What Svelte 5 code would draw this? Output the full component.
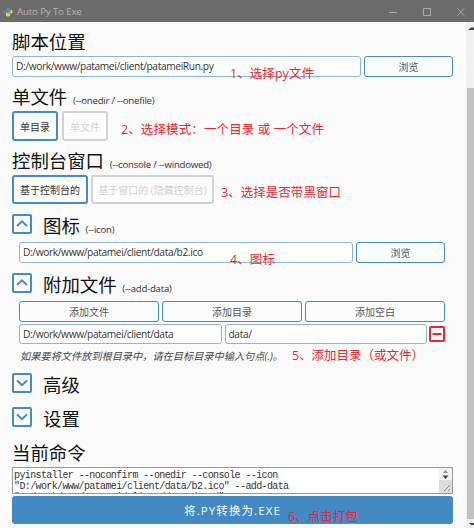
<script>
  let script = "D:/work/www/patamei/client/patameiRun.py";
  let icon = "D:/work/www/patamei/client/data/b2.ico";
  let source = "D:/work/www/patamei/client/data";
  let target = "data/";

  let command = [
    "pyinstaller --noconfirm --onedir --console --icon",
    '"D:/work/www/patamei/client/data/b2.ico" --add-data',
    '"D:/work/www/patamei/client/data;data/"',
  ];

  let oneFile = false;
  let windowed = false;

  let addButtons = ["添加文件", "添加目录", "添加空白"];

  let notes = [
    { text: "1、选择py文件", x: 230, y: 64, width: 84 },
    { text: "2、选择模式：一个目录 或 一个文件", x: 121, y: 120, width: 203 },
    { text: "3、选择是否带黑窗口", x: 221, y: 183, width: 120 },
    { text: "4、图标", x: 230, y: 250, width: 45 },
    { text: "5、添加目录（或文件）", x: 292, y: 346, width: 132 },
    { text: "6、点击打包", x: 288, y: 507, width: 70 },
  ];
</script>

{#snippet chevron(open)}
  <svg class="chevron" viewBox="0 0 20 20">
    <rect x="1" y="1" width="18" height="18" rx="1" />
    <path d={open ? "M5 12 L10 7.3 L15 12" : "M5 7.5 L10 12.2 L15 7.5"} />
  </svg>
{/snippet}

<div class="window">
  <header>
    <svg class="logo" viewBox="0 0 20 20">
      <path fill="#4b8fd0" d="M10 1C6 1 6 2.500 6 4v2h5v1H3.500C1 7 1 9 1 10.500S1.500 14 3.500 14H5v-2c0-2 1-3 3-3h4c1.500 0 2-1 2-2V4c0-2-1-3-4-3z" />
      <path fill="#f5d24b" d="M10 19c4 0 4-1.500 4-3v-2H9v-1h7.500c2.500 0 2.500-2 2.500-3.500S18.500 6 16.500 6H15v2c0 2-1 3-3 3H8c-1.500 0-2 1-2 2v3c0 2 1 3 4 3z" />
    </svg>
    <span>Auto Py To Exe</span>
    <svg class="controls" viewBox="0 0 76 10">
      <path d="M0 5.500H8M34.500 1.500H41.500V8.500H34.500ZM68.500 1.500L75 8.500M75 1.500L68.500 8.500" />
    </svg>
  </header>

  <div class="body">
    <main>
      <h2 class="first">脚本位置</h2>
      <div class="row">
        <div class="input">{script}</div>
        <button class="browse">浏览</button>
      </div>

      <h2 class="single">单文件 <small>(--onedir / --onefile)</small></h2>
      <div class="row toggles">
        <button class:off={oneFile}>单目录</button>
        <button class:off={!oneFile}>单文件</button>
      </div>

      <h2 class="console">控制台窗口 <small>(--console / --windowed)</small></h2>
      <div class="row toggles wide">
        <button class:off={windowed}>基于控制台的</button>
        <button class:off={!windowed}>基于窗口的 (隐藏控制台)</button>
      </div>

      <div class="fold icon">
        {@render chevron(true)}
        <h2>图标 <small>(--icon)</small></h2>
      </div>
      <div class="row inner">
        <div class="input">{icon}</div>
        <button class="browse">浏览</button>
      </div>

      <div class="fold files">
        {@render chevron(true)}
        <h2>附加文件 <small>(--add-data)</small></h2>
      </div>
      <div class="row inner add">
        {#each addButtons as label}
          <button>{label}</button>
        {/each}
      </div>
      <div class="row inner data">
        <div class="input">{source}</div>
        <div class="input">{target}</div>
        <svg class="minus" viewBox="0 0 16 16">
          <rect x="1" y="1" width="14" height="14" rx="1" />
          <path d="M3.500 8H12.500" />
        </svg>
      </div>
      <p>如果要将文件放到根目录中，请在目标目录中输入句点(.)。</p>

      <div class="fold">
        {@render chevron(false)}
        <h2>高级</h2>
      </div>
      <div class="fold settings">
        {@render chevron(false)}
        <h2>设置</h2>
      </div>

      <h2 class="current">当前命令</h2>
      <div class="command">
        <div class="lines">
          {#each command as line}
            <div>{line}</div>
          {/each}
        </div>
        <svg viewBox="0 0 13 25">
          <rect width="13" height="12" fill="#f1f1f1" />
          <rect y="12" width="13" height="13" fill="#dcdcdc" />
          <path d="M4 5L6.500 2L9 5Z" fill="#909090" />
          <path d="M3.500 7.500H9.500L6.500 11Z" fill="#444" />
          <path d="M5 23L11 17M9 23L11 21" stroke="#888" />
        </svg>
      </div>
      <button class="convert">将.PY转换为.EXE</button>
    </main>

    <div class="scrollbar">
      <svg viewBox="0 0 8 8"><path d="M2 6L5 3.500H8V6Z" /></svg>
      <div class="thumb"></div>
      <svg viewBox="0 0 8 8"><path d="M3 3H8V5H5Z" /></svg>
    </div>
  </div>

  {#each notes as note}
    <svg class="note" style="left: {note.x}px; top: {note.y}px" width={note.width + 2} height="20">
      <text x="0" y="14" textLength={note.width}>{note.text}</text>
    </svg>
  {/each}
</div>

<style>
  :global(body) {
    margin: 0;
  }

  .window {
    position: relative;
    width: 474px;
    height: 528px;
    overflow: hidden;
    display: flex;
    flex-direction: column;
    background-color: #fafafb;
    color: #111;
    font-family: "Open Sans", "Noto Sans CJK SC", sans-serif;
  }

  header {
    height: 22px;
    flex: none;
    display: flex;
    align-items: center;
    background-color: #6c6c6c;
    color: #b5b5b5;
    font-size: 9.6px;
    letter-spacing: -0.1px;
    padding: 1px 9px 0 3px;
    box-sizing: border-box;
  }

  .logo {
    width: 10px;
    height: 10px;
    margin-right: 4px;
  }

  .controls {
    width: 76px;
    height: 10px;
    margin-left: auto;
    fill: none;
    stroke: #aaa;
    stroke-width: 1;
  }

  .body {
    flex: 1;
    display: flex;
    justify-content: space-between;
    min-height: 0;
  }

  main {
    width: 441px;
    padding-left: 12px;
    display: flex;
    flex-direction: column;
  }

  h2 {
    margin: 0;
    height: 28px;
    line-height: 28px;
    font-size: 18.4px;
    font-weight: 400;
    white-space: nowrap;
    flex: none;
  }

  small {
    font-size: 9.6px;
    letter-spacing: -0.22px;
    color: #333;
    margin-left: 1px;
  }

  .first {
    margin-top: 6px;
  }

  .single {
    margin-top: 6px;
  }

  .console {
    margin-top: 6px;
  }

  .row {
    display: flex;
    gap: 3px;
    height: 21px;
    flex: none;
  }

  .inner {
    margin: 0 8px 0 7px;
  }

  .input {
    flex: 1;
    box-sizing: border-box;
    border: 1px solid #8fb5d6;
    border-radius: 3px;
    background-color: #fff;
    color: #333;
    padding-left: 3px;
    font-size: 10.2px;
    letter-spacing: -0.37px;
    line-height: 18px;
    white-space: nowrap;
  }

  button {
    box-sizing: border-box;
    border: 1.5px solid #468bc4;
    border-radius: 3px;
    background-color: #fbfcfc;
    color: #555;
    padding: 0;
    font-family: inherit;
    font-size: 10px;
    white-space: nowrap;
  }

  .browse {
    width: 89px;
  }

  .toggles {
    height: 30px;
    gap: 4px;
  }

  .toggles button {
    width: 46px;
    border-width: 2px;
    color: #333;
  }

  .toggles .off {
    border-color: #d2d2d2;
    color: #d2d2d2;
  }

  .wide {
    gap: 3px;
    height: 29px;
  }

  .wide button {
    width: 76px;
  }

  .wide .off {
    width: 123px;
  }

  .fold {
    display: flex;
    gap: 11px;
    height: 20px;
    flex: none;
    margin-top: 9px;
  }

  .fold h2 {
    margin-top: -2px;
  }

  .icon {
    margin-top: 10px;
    margin-bottom: 8px;
  }

  .files {
    margin-top: 10px;
    margin-bottom: 8px;
  }

  .settings {
    margin-top: 14px;
  }

  .chevron {
    width: 20px;
    height: 20px;
    fill: none;
    stroke: #468bc4;
    stroke-width: 2;
  }

  .add button {
    flex: 1;
  }

  .data {
    margin-top: 1px;
    align-items: center;
  }

  .minus {
    width: 16px;
    height: 16px;
    flex: none;
    margin-left: -1px;
    fill: none;
    stroke: #e02a35;
    stroke-width: 2;
  }

  p {
    margin: 4px 0 0 8px;
    height: 16px;
    line-height: 17px;
    font-size: 10.2px;
    font-style: italic;
    color: #444;
    white-space: nowrap;
  }

  .current {
    margin-top: 12px;
  }

  .command {
    height: 27px;
    flex: none;
    box-sizing: border-box;
    border: 1px solid #999;
    background-color: #fff;
    display: flex;
    justify-content: space-between;
    overflow: hidden;
  }

  .lines {
    padding: 2px 0 0 1px;
    font-family: "Liberation Mono", monospace;
    font-size: 10px;
    letter-spacing: -0.62px;
    line-height: 11.2px;
    color: #333;
    white-space: pre;
  }

  .command svg {
    width: 13px;
    height: 25px;
    flex: none;
  }

  .convert {
    height: 28px;
    flex: none;
    margin-top: 2px;
    border: 0;
    background-color: #438ac5;
    color: #f4f9fd;
    font-size: 11.5px;
    letter-spacing: 1.1px;
  }

  .scrollbar {
    width: 8px;
    display: flex;
    flex-direction: column;
    background-color: #f0f0f0;
  }

  .scrollbar svg {
    width: 8px;
    height: 8px;
    margin-top: 2px;
    fill: #444;
    flex: none;
  }

  .thumb {
    flex: 1;
    margin: 56px 0 -1px 1px;
    background-color: #c1c1c1;
  }

  .note {
    position: absolute;
    overflow: visible;
    fill: #e8282d;
    font-size: 12.5px;
  }
</style>
